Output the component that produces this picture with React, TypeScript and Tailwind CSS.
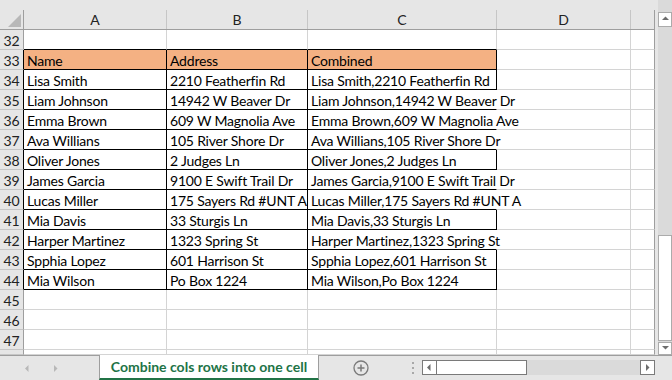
const font = { fontFamily: "Lato, 'Liberation Sans', sans-serif" }

type Row = { n: number; a?: string; b?: string; c?: string; over?: boolean; head?: boolean; boxed?: boolean; hideNum?: boolean }

const rows: Row[] = [
  { n: 32 },
  { n: 33, a: "Name", b: "Address", c: "Combined", head: true, boxed: true },
  { n: 34, a: "Lisa Smith", b: "2210 Featherfin Rd", c: "Lisa Smith,2210 Featherfin Rd", boxed: true },
  { n: 35, a: "Liam Johnson", b: "14942 W Beaver Dr", c: "Liam Johnson,14942 W Beaver Dr", over: true, boxed: true },
  { n: 36, a: "Emma Brown", b: "609 W Magnolia Ave", c: "Emma Brown,609 W Magnolia Ave", over: true, boxed: true },
  { n: 37, a: "Ava Willians", b: "105 River Shore Dr", c: "Ava Willians,105 River Shore Dr", over: true, boxed: true },
  { n: 38, a: "Oliver Jones", b: "2 Judges Ln", c: "Oliver Jones,2 Judges Ln", boxed: true },
  { n: 39, a: "James Garcia", b: "9100 E Swift Trail Dr", c: "James Garcia,9100 E Swift Trail Dr", over: true, boxed: true },
  { n: 40, a: "Lucas Miller", b: "175 Sayers Rd #UNT A", c: "Lucas Miller,175 Sayers Rd #UNT A", over: true, boxed: true },
  { n: 41, a: "Mia Davis", b: "33 Sturgis Ln", c: "Mia Davis,33 Sturgis Ln", boxed: true },
  { n: 42, a: "Harper Martinez", b: "1323 Spring St", c: "Harper Martinez,1323 Spring St", over: true, boxed: true },
  { n: 43, a: "Spphia Lopez", b: "601 Harrison St", c: "Spphia Lopez,601 Harrison St", boxed: true },
  { n: 44, a: "Mia Wilson", b: "Po Box 1224", c: "Mia Wilson,Po Box 1224", boxed: true },
  { n: 45 },
  { n: 46 },
  { n: 47 },
  { n: 48, hideNum: true },
]

function SheetRow({ r, nextBoxed }: { r: Row; nextBoxed: boolean }) {
  const box = r.boxed
  const bottom = box || nextBoxed ? "border-b-black" : "border-b-[#d4d4d4]"
  const fill = r.head ? "bg-[#f4b183]" : "bg-white"
  const cell =
    "h-full shrink-0 border-b border-r px-[3px] pt-[2px] leading-[18px] whitespace-nowrap text-[14px] tracking-[-0.2px] text-black [font-variant-ligatures:none]"
  return (
    <div className="flex h-[20px]">
      <div
        className={`h-full w-[24px] shrink-0 border-b border-r border-b-[#c6c6c6] bg-[#e6e6e6] text-center text-[14px] leading-[21px] text-[#222] ${box ? "border-r-black" : "border-r-[#9e9e9e]"}`}
      >
        {r.hideNum ? "" : r.n}
      </div>
      <div className={`${cell} w-[143px] overflow-hidden ${fill} ${bottom} ${box ? "border-r-black" : "border-r-[#d4d4d4]"}`}>{r.a}</div>
      <div className={`${cell} w-[141px] overflow-hidden ${fill} ${bottom} ${box ? "border-r-black" : "border-r-[#d4d4d4]"}`}>{r.b}</div>
      <div
        className={`${cell} relative z-10 w-[189px] ${fill} ${bottom} ${r.over ? "border-r-transparent" : box ? "border-r-black" : "border-r-[#d4d4d4]"}`}
      >
        {r.c}
      </div>
      <div className={`${cell} w-[134px] border-b-[#d4d4d4] border-r-[#d4d4d4] bg-white`} />
      <div className={`${cell} w-[24px] border-b-[#d4d4d4] border-r-[#9e9e9e] bg-white`} />
    </div>
  )
}

function ColHead({ w, label, last }: { w: string; label: string; last?: boolean }) {
  return (
    <div className={`${w} h-full shrink-0 border-r text-center text-[14px] leading-[20px] text-[#222] ${last ? "border-r-[#9e9e9e]" : "border-r-[#c6c6c6]"}`}>
      {label}
    </div>
  )
}

function Arrow({ dir }: { dir: "up" | "down" | "left" | "right" }) {
  const pts = {
    up: "2,6 9,6 5.5,2.5",
    down: "2,3 9,3 5.5,6.5",
    left: "6.5,2 6.5,9 3,5.5",
    right: "4,2 4,9 7.5,5.5",
  }[dir]
  return (
    <svg width="11" height="11" viewBox="0 0 11 11">
      <polygon points={pts} fill="#6d6d6d" />
    </svg>
  )
}

export default function App() {
  return (
    <div className="flex h-[380px] w-[672px] flex-col overflow-hidden bg-[#e6e6e6]" style={font}>
      <div className="flex h-[355px]">
        <div className="flex w-[655px] flex-col overflow-hidden">
          <div className="h-[10px] shrink-0 bg-[#e6e6e6]" />
          <div className="flex h-[20px] shrink-0 border-b border-b-[#9e9e9e] bg-[#e6e6e6]">
            <div className="relative h-full w-[24px] shrink-0 border-r border-r-[#9e9e9e]">
              <svg className="absolute left-[8px] top-[4px]" width="14" height="14" viewBox="0 0 14 14">
                <polygon points="13,0 13,13 0,13" fill="#b8b8b8" />
              </svg>
            </div>
            <ColHead w="w-[143px]" label="A" />
            <ColHead w="w-[141px]" label="B" />
            <ColHead w="w-[189px]" label="C" />
            <ColHead w="w-[134px]" label="D" />
            <ColHead w="w-[24px]" label="" last />
          </div>
          {rows.map((r, i) => (
            <SheetRow key={r.n} r={r} nextBoxed={!!rows[i + 1]?.boxed} />
          ))}
        </div>
        <div className="flex w-[17px] flex-col pl-[3px]">
          <div className="flex flex-1 flex-col bg-[#dadada] pt-[12px]">
            <div className="flex h-[15px] w-[14px] items-center justify-center border border-[#ababab] bg-white">
              <Arrow dir="up" />
            </div>
            <div className="h-[208px]" />
            <div className="h-[106px] w-[14px] border border-[#ababab] bg-white" />
            <div className="mt-[1px] flex h-[13px] w-[14px] items-center justify-center border border-[#ababab] bg-white">
              <Arrow dir="down" />
            </div>
          </div>
        </div>
      </div>
      <div className="flex h-[25px] items-stretch border-t border-t-[#9e9e9e] bg-[#e6e6e6]">
        <div className="flex w-[99px] items-center gap-[17px] pl-[22px] pt-[1px]">
          <svg width="11" height="11" viewBox="0 0 11 11"><polygon points="6.5,2 6.5,9 3,5.5" fill="#b8b8b8" /></svg>
          <svg width="11" height="11" viewBox="0 0 11 11"><polygon points="4,2 4,9 7.5,5.5" fill="#b8b8b8" /></svg>
        </div>
        <div className="-mt-[1px] flex w-[220px] items-center justify-center border-x border-x-[#9e9e9e] border-b-2 border-b-[#217346] bg-white text-[14px] font-bold text-[#217346]">
          Combine cols rows into one cell
        </div>
        <div className="flex w-[84px] items-center justify-center">
          <svg width="16" height="16" viewBox="0 0 16 16">
            <circle cx="8" cy="8" r="7" fill="none" stroke="#7a7a7a" strokeWidth="1.3" />
            <path d="M8 4.5v7M4.5 8h7" stroke="#7a7a7a" strokeWidth="1.5" />
          </svg>
        </div>
        <div className="flex w-[19px] flex-col items-center justify-center gap-[3px]">
          <div className="h-[2px] w-[2px] bg-[#a8a8a8]" />
          <div className="h-[2px] w-[2px] bg-[#a8a8a8]" />
          <div className="h-[2px] w-[2px] bg-[#a8a8a8]" />
        </div>
        <div className="flex flex-1 items-center pb-[1px]">
          <div className="flex h-[15px] w-[233px]">
            <div className="flex w-[15px] items-center justify-center border border-[#7a7a7a] bg-white">
              <Arrow dir="left" />
            </div>
            <div className="w-[90px] border-y border-r border-[#7a7a7a] bg-white" />
            <div className="flex-1 bg-[#dadada]" />
            <div className="flex w-[15px] items-center justify-center border border-[#7a7a7a] bg-white">
              <Arrow dir="right" />
            </div>
          </div>
        </div>
      </div>
    </div>
  )
}
